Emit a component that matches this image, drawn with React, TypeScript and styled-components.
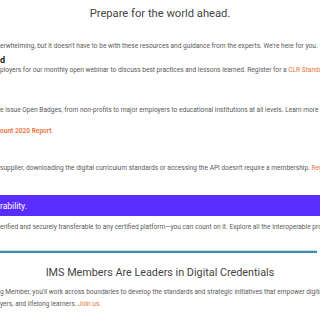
import React from "react";
import styled, { createGlobalStyle } from "styled-components";

const Global = createGlobalStyle`
  html, body { margin: 0; padding: 0; background: #fff; }
  body { width: 320px; height: 320px; overflow: hidden; font-family: Roboto, "Liberation Sans", sans-serif; }
`;

const Page = styled.div`
  display: flex;
  flex-direction: column;
  width: 320px;
  overflow: hidden;
`;

const Title = styled.h1`
  margin: 0;
  font-size: 11.2px;
  font-weight: 400;
  line-height: 27px;
  color: #444;
  text-align: center;
`;

const Line = styled.p<{ $mt?: number; $lh?: number }>`
  margin: ${(p) => p.$mt ?? 0}px 0 0 0;
  font-size: 6.6px;
  line-height: ${(p) => p.$lh ?? 12}px;
  color: #5a5a5a;
  white-space: nowrap;
  overflow: hidden;
`;

const Heading = styled.h3`
  margin: 3px 0 0 0;
  font-size: 9px;
  font-weight: 700;
  line-height: 10px;
  color: #222;
`;

const Link = styled.a<{ $bold?: boolean }>`
  color: #e8733c;
  text-decoration: none;
  font-weight: ${(p) => (p.$bold ? 600 : 400)};
`;

const Banner = styled.div`
  margin-top: 21px;
  height: 21px;
  background: #5b2cff;
  color: #fff;
  font-size: 8.5px;
  display: flex;
  align-items: center;
  white-space: nowrap;
  overflow: hidden;
`;

const Rule = styled.hr`
  margin: 18px 3px 0 0;
  border: 0;
  height: 2px;
  background: #3a8db0;
  box-shadow: 0 -1px 0 #c7e0ea;
`;

const SubTitle = styled.h2`
  margin: 10px 0 0 0;
  font-size: 10.8px;
  font-weight: 400;
  line-height: 20px;
  color: #444;
  text-align: center;
  white-space: nowrap;
`;

export default function App() {
  return (
    <>
      <Global />
      <Page>
        <Title>Prepare for the world ahead.</Title>
        <Line $mt={13}>
          erwhelming, but it doesn't have to be with these resources and guidance from the experts. We're here for you.
        </Line>
        <Heading>d</Heading>
        <Line $lh={10}>
          ployers for our monthly open webinar to discuss best practices and lessons learned. Register for a{" "}
          <Link>CLR Standard</Link>
        </Line>
        <Line $mt={29}>
          e issue Open Badges, from non-profits to major employers to educational institutions at all levels. Learn more via
        </Line>
        <Line $mt={9}>
          <Link $bold>ount 2020 Report.</Link>
        </Line>
        <Line $mt={25}>
          supplier, downloading the digital curriculum standards or accessing the API doesn't require a membership.{" "}
          <Link>Register</Link>
        </Line>
        <Banner>rability.</Banner>
        <Line $mt={5}>
          erified and securely transferable to any certified platform—you can count on it. Explore all the interoperable products
        </Line>
        <Rule />
        <SubTitle>IMS Members Are Leaders in Digital Credentials</SubTitle>
        <Line $mt={3}>
          g Member, you'll work across boundaries to develop the standards and strategic initiatives that empower digital
        </Line>
        <Line>
          yers, and lifelong learners. <Link>Join us.</Link>
        </Line>
      </Page>
    </>
  );
}
